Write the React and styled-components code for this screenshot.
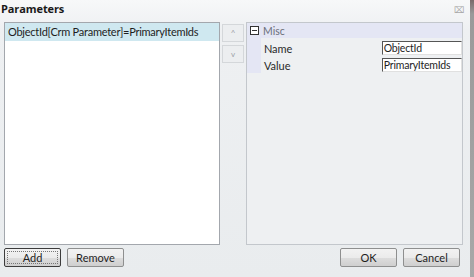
import React from "react";
import styled, { createGlobalStyle } from "styled-components";

const Global = createGlobalStyle`
  html, body { margin: 0; padding: 0; }
  body { width: 474px; height: 277px; overflow: hidden; font-family: Lato, "Open Sans", sans-serif; }
`;

const Window = styled.div`
  width: 474px;
  height: 277px;
  box-sizing: border-box;
  display: flex;
`;

const Dialog = styled.div`
  flex: 1;
  display: flex;
  flex-direction: column;
  background: linear-gradient(#f7f8f9 0px, #eef0f2 30px, #e9ecee 100%);
  padding: 0 0 0 4px;
`;

const Edge = styled.div`
  width: 4px;
  background: linear-gradient(#7a6a6a 0px, #9a9a9a 14px, #a8a8a8 100%);
`;

const TitleBar = styled.div`
  height: 22px;
  display: flex;
  align-items: flex-start;
  justify-content: space-between;
  padding-right: 6px;
`;

const Title = styled.div`
  font-family: "Open Sans", sans-serif;
  font-weight: 700;
  font-size: 11px;
  color: #1a1a1a;
  margin-top: 1px;
  margin-left: -3px;
  letter-spacing: -0.1px;
`;

const Close = styled.div`
  font-size: 9px;
  color: #a8a8a8;
  margin-top: 4px;
`;

const Body = styled.div`
  display: flex;
  height: 223px;
`;

const ListBox = styled.div`
  width: 216px;
  box-sizing: border-box;
  border: 1px solid #a3a7ad;
  background: #fff;
`;

const ListItem = styled.div`
  height: 18px;
  line-height: 18px;
  font-size: 11px;
  letter-spacing: -0.25px;
  padding-left: 3px;
  color: #1e1e1e;
  background: ${(p) => (p.$selected ? "#cfe8f0" : "transparent")};
  white-space: nowrap;
`;

const Movers = styled.div`
  width: 26px;
  display: flex;
  flex-direction: column;
  align-items: center;
  gap: 3px;
  padding-top: 2px;
`;

const MoveBtn = styled.div`
  width: 22px;
  height: 18px;
  box-sizing: border-box;
  border: 1px solid #d4d7da;
  background: #eceef0;
  color: #9aa0a6;
  font-size: 8px;
  display: flex;
  align-items: center;
  justify-content: center;
`;

const Grid = styled.div`
  width: 217px;
  box-sizing: border-box;
  border: 1px solid #c3c7cc;
  background: #eef0f2;
  display: flex;
  flex-direction: column;
`;

const Category = styled.div`
  height: 15px;
  background: #e4e6f4;
  display: flex;
  align-items: center;
  padding-left: 3px;
  gap: 4px;
  font-size: 10.5px;
  color: #6b6f7a;
`;

const Minus = styled.div`
  width: 7px;
  height: 7px;
  border: 1px solid #333;
  position: relative;
  background: #fff;
  &::after {
    content: "";
    position: absolute;
    left: 1px;
    right: 1px;
    top: 3px;
    height: 1px;
    background: #333;
  }
`;

const PropRow = styled.div`
  display: flex;
  height: ${(p) => p.$h}px;
  align-items: flex-end;
`;

const Indent = styled.div`
  width: 14px;
  align-self: stretch;
  background: #e4e6f4;
`;

const PropName = styled.div`
  width: 119px;
  font-size: 11px;
  color: #2a2a2a;
  padding-left: 3px;
  align-self: center;
  padding-top: ${(p) => p.$pt || 0}px;
`;

const PropValue = styled.div`
  width: 81px;
  height: 14px;
  box-sizing: border-box;
  border-top: 1px solid #555;
  border-left: 1px solid #555;
  border-right: 1px solid #e0e0e0;
  border-bottom: 1px solid #e0e0e0;
  background: #fff;
  font-size: 10.5px;
  letter-spacing: -0.2px;
  line-height: 12px;
  padding-left: 1px;
  color: #1e1e1e;
  white-space: nowrap;
  overflow: hidden;
  margin-bottom: ${(p) => p.$mb || 0}px;
`;

const Footer = styled.div`
  display: flex;
  align-items: flex-start;
  padding-top: 3px;
  gap: 6px;
`;

const Button = styled.div`
  width: 57px;
  height: 19px;
  box-sizing: border-box;
  border: 1px solid ${(p) => (p.$default ? "#3c3c3c" : "#8e8f8f")};
  border-radius: 2px;
  background: linear-gradient(#f2f2f2 0%, #ebebeb 50%, #dddddd 51%, #cfcfcf 100%);
  font-size: 11px;
  color: #1e1e1e;
  display: flex;
  align-items: center;
  justify-content: center;
  position: relative;
  margin-left: ${(p) => p.$ml || 0}px;
  &::before {
    content: "";
    display: ${(p) => (p.$default ? "block" : "none")};
    position: absolute;
    inset: 2px;
    border: 1px dotted #777;
  }
`;

export default function App() {
  return (
    <Window>
      <Global />
      <Dialog>
        <TitleBar>
          <Title>Parameters</Title>
          <Close>⌧</Close>
        </TitleBar>
        <Body>
          <ListBox>
            <ListItem $selected>ObjectId[Crm Parameter]=PrimaryItemIds</ListItem>
          </ListBox>
          <Movers>
            <MoveBtn>^</MoveBtn>
            <MoveBtn>v</MoveBtn>
          </Movers>
          <Grid>
            <Category>
              <Minus />
              <span>Misc</span>
            </Category>
            <PropRow $h={18}>
              <Indent />
              <PropName $pt={2}>Name</PropName>
              <PropValue $mb={1}>ObjectId</PropValue>
            </PropRow>
            <PropRow $h={17}>
              <Indent />
              <PropName $pt={2}>Value</PropName>
              <PropValue $mb={1}>PrimaryItemIds</PropValue>
            </PropRow>
          </Grid>
        </Body>
        <Footer>
          <Button $default>Add</Button>
          <Button>Remove</Button>
          <Button $ml={210}>OK</Button>
          <Button>Cancel</Button>
        </Footer>
      </Dialog>
      <Edge />
    </Window>
  );
}
